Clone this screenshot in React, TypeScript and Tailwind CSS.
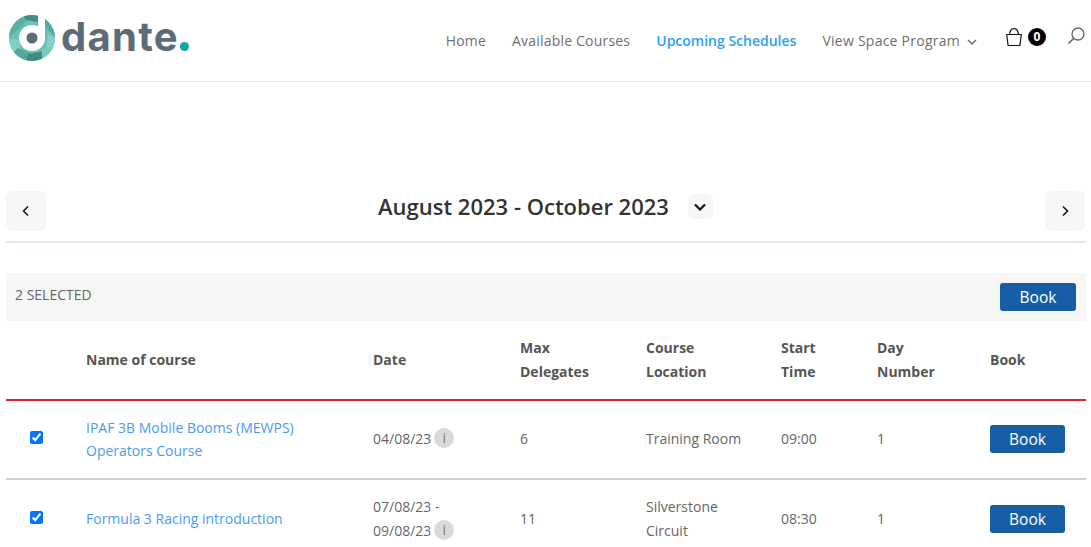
import React from "react";

const Logo = () => (
  <svg width="48" height="48" viewBox="0 0 48 48" className="shrink-0 -mt-[5px]">
    <defs>
      <clipPath id="c"><circle cx="24" cy="24" r="23" /></clipPath>
    </defs>
    <g clipPath="url(#c)">
      <rect width="48" height="48" fill="#6cc0b5" />
      <polygon points="0,0 24,0 14,12 0,24" fill="#5cb0a4" />
      <polygon points="14,0 34,0 30,8 18,6" fill="#3f8f85" />
      <polygon points="34,0 48,10 48,24 36,12" fill="#58ab9f" />
      <polygon points="40,20 48,24 48,34 38,36" fill="#86d0c6" />
      <polygon points="0,24 10,26 14,40 0,40" fill="#82d0c5" />
      <polygon points="10,34 24,40 18,48 2,42" fill="#55a89c" />
      <polygon points="20,40 36,37 34,48 18,48" fill="#3d8d82" />
      <polygon points="34,36 48,30 48,48 34,48" fill="#7cc9be" />
    </g>
    <circle cx="24" cy="24" r="13" fill="#fff" />
    <rect x="30" y="2" width="7" height="22" fill="#fff" />
    <circle cx="24" cy="24" r="5.500" fill="#5d6b78" />
  </svg>
);

const Bag = () => (
  <svg width="16" height="18" viewBox="0 0 16 18" fill="none" stroke="#111" strokeWidth="1.200" className="block shrink-0">
    <path d="M.7 6.500h14.600l-1.400 11H2.100z" strokeLinejoin="round" />
    <path d="M3.500 6.500C4 2.500 5.500.7 8 .7s4 1.800 4.500 5.800" />
  </svg>
);

const Search = () => (
  <svg width="18" height="18" viewBox="0 0 18 18" fill="none" stroke="#666" strokeWidth="1.300" className="block shrink-0">
    <circle cx="11" cy="7" r="6" />
    <path d="M6.500 11.500 1.500 16.500" strokeWidth="1.700" />
  </svg>
);

const Chev = ({ d, w = 2 }: { d: string; w?: number }) => (
  <svg width="12" height="12" viewBox="0 0 12 12" fill="none" stroke="#111" strokeWidth={w}>
    <path d={d} />
  </svg>
);

const Info = () => (
  <span className="inline-flex w-5 h-5 -my-1 rounded-full bg-[#dcdad8] text-[#777] items-center justify-center text-[14px] align-[1px] ml-[3px]">i</span>
);

const BookBtn = ({ w = "w-[75px]" }: { w?: string }) => (
  <button className={`${w} block h-7 rounded-[3px] bg-[#155ea6] text-white text-[15.500px] leading-7 text-center`}>Book</button>
);

export default function App() {
  return (
    <div className="h-[547px] w-[1091px] overflow-hidden bg-white font-['Open_Sans',sans-serif] text-[#666]">
      <header className="h-[82px] border-b border-[#e6e6e6] flex items-center pl-2 pr-[6px]">
        <div className="flex items-center">
          <Logo />
          <span className="ml-[5px] font-['Inter',sans-serif] font-bold text-[40px] leading-none tracking-[1.300px] text-[#5d6b78] -mt-[8px]">dante<span className="inline-block w-[9px] h-[9px] rounded-full bg-[#0fa89c] ml-[1px]"></span></span>
        </div>
        <nav className="ml-auto flex items-center text-[14px] text-[#6f6f6f]">
          <a className="mr-[26px] tracking-[0.2px]">Home</a>
          <a className="mr-[26px] tracking-[0.2px]">Available Courses</a>
          <a className="mr-[26px] font-semibold text-[#2ea3f2]">Upcoming Schedules</a>
          <a className="flex items-center tracking-[0.25px]">View Space Program
            <svg width="10" height="6" viewBox="0 0 10 6" fill="none" stroke="#666" strokeWidth="1.300" className="ml-[7px] mt-[3px]"><path d="M1 1l4 4 4-4" /></svg>
          </a>
          <span className="ml-[29px] -mt-[7px]"><Bag /></span>
          <span className="ml-[6px] -mt-[8px] w-[18px] h-[18px] rounded-full bg-black text-white text-[12px] font-bold flex items-center justify-center">0</span>
          <span className="ml-[21px] mt-[-9px]"><Search /></span>
        </nav>
      </header>

      <main className="pl-[6px] pr-[5px]">
        <div className="mt-[109px] flex items-center justify-between border-b-2 border-[#f3e3e3] pb-[10px] h-[52px]">
          <button className="w-10 h-10 rounded-md bg-[#f6f6f6] flex items-center justify-center"><Chev d="M8 1.500 3.500 6 8 10.500" w={1.500} /></button>
          <div className="flex items-center -mt-[9px]">
            <h2 className="text-[22px] leading-8 font-semibold text-[#333] -mt-[2px]">August 2023 - October 2023</h2>
            <button className="ml-[19px] w-[25px] h-[25px] rounded-md bg-[#f6f6f6] flex items-center justify-center"><svg width="14" height="14" viewBox="0 0 14 14" fill="none" stroke="#111" strokeWidth="2.200"><path d="M2 4.500 7 9.500l5-5" /></svg></button>
          </div>
          <button className="w-10 h-10 mr-px rounded-md bg-[#f6f6f6] flex items-center justify-center"><Chev d="M4 1.500 8.500 6 4 10.500" w={1.500} /></button>
        </div>

        <div className="mt-[30px] h-12 bg-[#f6f6f6] flex items-center justify-between pl-[9px] pr-[10px]">
          <span className="text-[14px] text-[#666] uppercase -mt-[5px]">2 selected</span>
          <BookBtn w="w-[76px]" />
        </div>

        <table className="w-[1080px] table-fixed border-collapse">
          <colgroup>
            <col className="w-[66px]" />
            <col className="w-[287px]" />
            <col className="w-[147px]" />
            <col className="w-[126px]" />
            <col className="w-[135px]" />
            <col className="w-[96px]" />
            <col className="w-[113px]" />
            <col className="w-[110px]" />
          </colgroup>
          <thead>
            <tr className="h-[79px] border-b-2 border-[#dc1f2c] text-left text-[14px] leading-[24px] text-[#555]">
              <th className="font-bold"></th>
              <th className="px-[14px] font-bold">Name of course</th>
              <th className="px-[14px] font-bold">Date</th>
              <th className="px-[14px] font-bold">Max<br />Delegates</th>
              <th className="px-[14px] font-bold">Course<br />Location</th>
              <th className="px-[14px] font-bold">Start<br />Time</th>
              <th className="px-[14px] font-bold">Day<br />Number</th>
              <th className="px-[14px] font-bold">Book</th>
            </tr>
          </thead>
          <tbody>
            <tr className="h-[79px] border-b-2 border-[#c5d0d8] text-[14px] leading-[23px] text-[#666]">
              <td className="pl-6 pb-[2px] align-middle"><input type="checkbox" defaultChecked readOnly className="block w-[13px] h-[13px] -mt-[2px]" /></td>
              <td className="px-[14px] pb-[2px] align-middle text-[#4a9cf0]">IPAF 3B Mobile Booms (MEWPS) Operators Course</td>
              <td className="px-[14px] pb-[2px] align-middle">04/08/23<Info /></td>
              <td className="px-[14px] pb-[2px] align-middle">6</td>
              <td className="px-[14px] pb-[2px] align-middle">Training Room</td>
              <td className="px-[14px] pb-[2px] align-middle">09:00</td>
              <td className="px-[14px] pb-[2px] align-middle">1</td>
              <td className="px-[14px] pb-[2px] align-middle"><BookBtn /></td>
            </tr>
            <tr className="h-[79px] text-[14px] leading-[24px] text-[#666]">
              <td className="pl-6 align-middle"><input type="checkbox" defaultChecked readOnly className="block w-[13px] h-[13px] -mt-[4px]" /></td>
              <td className="px-[14px] align-middle text-[#4a9cf0]">Formula 3 Racing introduction</td>
              <td className="px-[14px] align-middle">07/08/23 -<br />09/08/23<Info /></td>
              <td className="px-[14px] align-middle">11</td>
              <td className="px-[14px] align-middle">Silverstone Circuit</td>
              <td className="px-[14px] align-middle">08:30</td>
              <td className="px-[14px] align-middle">1</td>
              <td className="px-[14px] align-middle"><BookBtn /></td>
            </tr>
          </tbody>
        </table>
      </main>
    </div>
  );
}
